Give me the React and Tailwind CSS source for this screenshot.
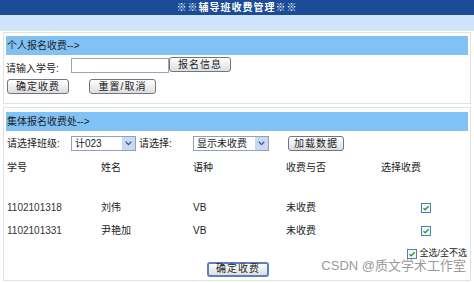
import React from "react";

const font = { fontFamily: '"Liberation Sans", "Noto Sans CJK SC", sans-serif' };

const Btn = ({ children, className = "" }) => (
  <button
    className={
      "h-[15px] border border-[#6f7680] rounded-[3px] bg-gradient-to-b from-white to-[#dcdde0] text-[10px] leading-none text-[#222] tracking-[1px] " +
      className
    }
  >
    {children}
  </button>
);

const Check = () => (
  <span className="inline-flex w-[10px] h-[10px] border border-[#4f7fb0] bg-[#f4f8fb] items-center justify-center">
    <svg width="8" height="8" viewBox="0 0 8 8">
      <path d="M1.5 4.2 L3.2 5.8 L6.6 2.2" stroke="#2f9b2f" strokeWidth="1.4" fill="none" />
    </svg>
  </span>
);

const Select = ({ value, className = "" }) => (
  <div className={"h-[15px] border border-[#8fa3b8] bg-white flex items-center " + className}>
    <span className="flex-1 pl-[3px] text-[10px] text-[#222] leading-none">{value}</span>
    <span className="w-[13px] h-[13px] bg-[#c9d9f4] flex items-center justify-center">
      <svg width="7" height="5" viewBox="0 0 7 5">
        <path d="M0.8 0.8 L3.5 3.6 L6.2 0.8" stroke="#3b5a8c" strokeWidth="1.3" fill="none" />
      </svg>
    </span>
  </div>
);

const rows = [
  { id: "1102101318", name: "刘伟", lang: "VB", paid: "未收费" },
  { id: "1102101331", name: "尹艳加", lang: "VB", paid: "未收费" },
];

export default function App() {
  return (
    <div className="w-[474px] h-[283px] bg-white overflow-hidden text-[#222]" style={font}>
      <div className="h-[15px] bg-[#1b4c97] flex items-center justify-center text-white text-[10px] font-bold tracking-[1px]">
        ※※辅导班收费管理※※
      </div>
      <div className="h-[16px] bg-[#cfe3f9]" />
      <div className="mt-[1px] mx-[3px] h-[72px] border border-[#e2e2e2] pt-[3px] px-[2px]">
        <div className="h-[19px] bg-[#80c1f6] flex items-center pl-[1px] text-[10px]">个人报名收费--&gt;</div>
        <div className="flex items-center mt-[3px] h-[15px]">
          <span className="w-[65px] text-[10px] mt-[5px]">请输入学号:</span>
          <div className="w-[98px] h-[15px] border border-[#9aa6b4] bg-white" />
          <Btn className="w-[62px] -mt-[2px]">报名信息</Btn>
        </div>
        <div className="flex items-center mt-[6px]">
          <Btn className="w-[62px] ml-[1px]">确定收费</Btn>
          <Btn className="w-[67px] ml-[20px]">重置/取消</Btn>
        </div>
      </div>
      <div className="mt-[3px] mx-[3px] h-[174px] border border-[#e2e2e2] pt-[4px] px-[2px] relative">
        <div className="h-[19px] bg-[#80c1f6] flex items-center pl-[1px] text-[10px]">集体报名收费处--&gt;</div>
        <div className="flex items-center mt-[5px] h-[15px] text-[10px]">
          <span className="w-[65px] pl-[1px]">请选择班级:</span>
          <Select value="计023" className="w-[65px]" />
          <span className="w-[57px] pl-[3px]">请选择:</span>
          <Select value="显示未收费" className="w-[76px]" />
          <Btn className="w-[56px] ml-[19px]">加载数据</Btn>
        </div>
        <div className="grid grid-cols-[94px_92px_93px_95px_1fr] text-[10px] mt-[9px] pl-[1px]">
          <span>学号</span>
          <span>姓名</span>
          <span>语种</span>
          <span>收费与否</span>
          <span>选择收费</span>
        </div>
        <div className="mt-[24px] flex flex-col gap-[13px]">
          {rows.map((r) => (
            <div key={r.id} className="grid grid-cols-[94px_92px_93px_135px_1fr] text-[10px] items-center h-[10px] pl-[1px]">
              <span className="text-[#333]">{r.id}</span>
              <span>{r.name}</span>
              <span>{r.lang}</span>
              <span>{r.paid}</span>
              <span className="mt-[2px]"><Check /></span>
            </div>
          ))}
        </div>
        <div className="flex justify-end items-center gap-[2px] mt-[15px] pr-[1px] text-[9px]">
          <Check />
          <span>全选/全不选</span>
        </div>
        <div className="flex mt-[1px] pl-[201px]">
          <button className="w-[62px] h-[15px] border-2 border-[#5b7fc0] rounded-[3px] bg-gradient-to-b from-white to-[#dcdde0] text-[10px] leading-none tracking-[1px]">
            确定收费
          </button>
        </div>
        <span className="absolute right-[4px] bottom-[5px] text-[13px] text-[#9a9a9a]">CSDN @质文学术工作室</span>
      </div>
    </div>
  );
}
